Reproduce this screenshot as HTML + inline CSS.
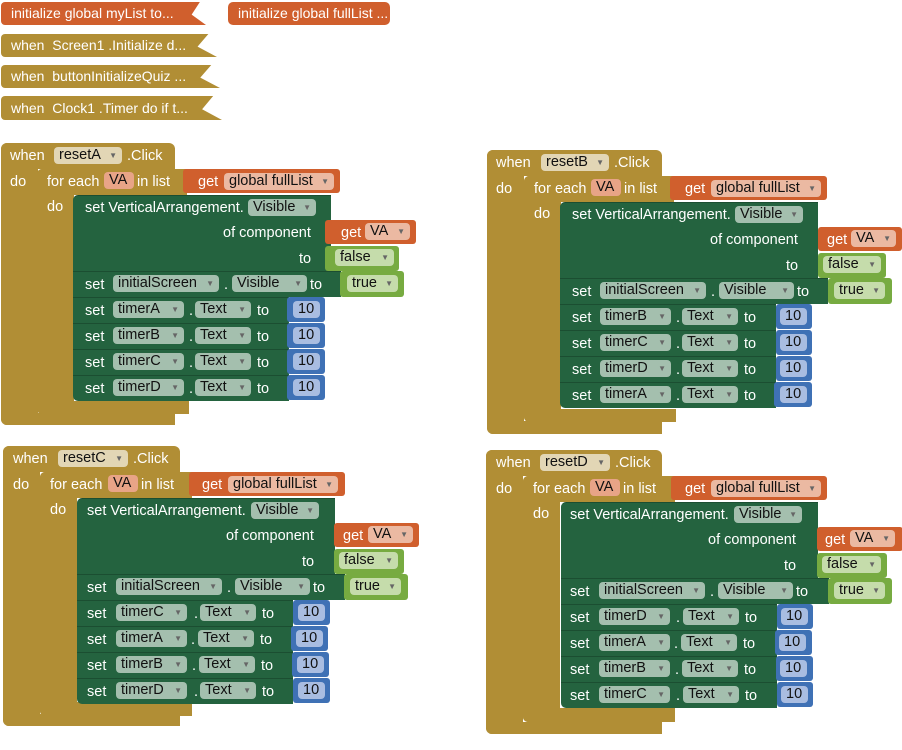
<!DOCTYPE html>
<html><head><meta charset="utf-8"><style>
*{margin:0;padding:0;box-sizing:border-box}
body{width:902px;height:735px;background:#fff;position:relative;overflow:hidden;font-family:"Liberation Sans",Arial,sans-serif;font-size:14.5px;color:#fff}
.g{position:absolute;width:420px;height:300px}
.b{position:absolute}
.gold{background:#b18e35}
.grn{background:#24633f;border-top:1px solid #1b4e31}
.org{background:#d05f2d;border-radius:3px}
.lg{background:#77ab41;border-radius:3px}
.bl{background:#3f71b5;border-radius:3px}
.t{position:absolute;white-space:nowrap;line-height:16px;height:16px;margin-top:1px}
.p{position:absolute;height:17px;line-height:17px;border-radius:4px;padding-left:5px;color:#111;white-space:nowrap}
.p i{font-style:normal;font-size:8px;color:#666;position:absolute;right:5px;top:0}
.pg{background:#e2d6b5}.pd{background:#a4bfae}.po{background:#ebb9a2}.pl{background:#c5dcab}.pb{background:#a9bde1}.pv{background:#e8a487}
.top{position:absolute;height:23px;line-height:23px;padding-left:10px;white-space:nowrap;font-size:14px}
</style></head><body>

<div class="top" style="left:1px;top:2px;width:205px;background:#d05f2d;border-radius:4px 0 0 4px;clip-path:polygon(0 0,97% 0,93% 55%,100% 100%,0 100%)">initialize global myList to...</div>
<div class="top" style="left:228px;top:2px;width:162px;background:#d05f2d;border-radius:5px">initialize global fullList ...</div>
<div class="top" style="left:1px;top:34px;width:216px;background:#b18e35;border-radius:4px 0 0 4px;clip-path:polygon(0 0,96% 0,91% 55%,100% 100%,0 100%)">when &nbsp;Screen1 .Initialize d...</div>
<div class="top" style="left:1px;top:65px;width:219px;background:#b18e35;border-radius:4px 0 0 4px;clip-path:polygon(0 0,96% 0,91% 55%,100% 100%,0 100%)">when &nbsp;buttonInitializeQuiz ...</div>
<div class="top" style="left:1px;top:96px;width:221px;height:24px;line-height:24px;background:#b18e35;border-radius:4px 0 0 4px;clip-path:polygon(0 0,96% 0,91% 55%,100% 100%,0 100%)">when &nbsp;Clock1 .Timer do if t...</div>

<!-- A -->
<div class="g" style="left:1px;top:143px">
 <div class="b gold" style="left:0;top:0;width:174px;height:26px;border-radius:6px 6px 0 0"></div>
 <div class="b gold" style="left:0;top:0;width:37px;height:282px;border-radius:6px 0 0 6px"></div>
 <div class="b gold" style="left:0;top:270px;width:174px;height:12px;border-radius:0 0 0 6px"></div>
 <div class="t" style="left:9px;top:4px">when</div>
 <div class="p pg" style="left:53px;top:4px;width:68px">resetA<i>▼</i></div>
 <div class="t" style="left:126px;top:4px">.Click</div>
 <div class="t" style="left:9px;top:30px">do</div>
 <div class="b gold" style="left:36px;top:26px;width:150px;height:26px;border-radius:5px 0 0 0"></div>
 <div class="b gold" style="left:36px;top:26px;width:37px;height:245px;border-radius:5px 0 0 5px"></div>
 <div class="b gold" style="left:36px;top:258px;width:152px;height:13px;border-radius:0 0 0 5px"></div>
 <div class="t" style="left:46px;top:30px">for each</div>
 <div class="p pv" style="left:103px;top:29px;width:30px">VA</div>
 <div class="t" style="left:136px;top:30px">in list</div>
 <div class="t" style="left:46px;top:55px">do</div>
 <div class="b org" style="left:182px;top:26px;width:157px;height:24px"></div>
 <div class="t" style="left:197px;top:30px">get</div>
 <div class="p po" style="left:223px;top:30px;width:110px">global fullList<i>▼</i></div>
 <div class="b grn" style="left:72px;top:52px;width:258px;height:76px;border-radius:5px 0 0 0"></div>
 <div class="t" style="left:84px;top:56px">set VerticalArrangement.</div>
 <div class="p pd" style="left:247px;top:56px;width:68px">Visible<i>▼</i></div>
 <div class="t" style="left:222px;top:81px">of component</div>
 <div class="t" style="left:298px;top:107px">to</div>
 <div class="b org" style="left:324px;top:77px;width:91px;height:24px"></div>
 <div class="t" style="left:340px;top:81px">get</div>
 <div class="p po" style="left:364px;top:80px;width:45px">VA<i>▼</i></div>
 <div class="b lg" style="left:324px;top:103px;width:74px;height:25px"></div>
 <div class="p pl" style="left:334px;top:106px;width:59px">false<i>▼</i></div>
 <div class="b grn" style="left:72px;top:128px;width:268px;height:26px"></div>
 <div class="t" style="left:84px;top:133px">set</div>
 <div class="p pd" style="left:112px;top:132px;width:106px">initialScreen<i>▼</i></div>
 <div class="t" style="left:223px;top:133px">.</div>
 <div class="p pd" style="left:231px;top:132px;width:75px">Visible<i>▼</i></div>
 <div class="t" style="left:309px;top:133px">to</div>
 <div class="b lg" style="left:339px;top:128px;width:64px;height:26px"></div>
 <div class="p pl" style="left:346px;top:132px;width:51px">true<i>▼</i></div>
 <div class="b grn" style="left:72px;top:154px;width:216px;height:26px"></div>
 <div class="t" style="left:84px;top:159px">set</div><div class="p pd" style="left:112px;top:158px;width:71px">timerA<i>▼</i></div><div class="t" style="left:188px;top:159px">.</div><div class="p pd" style="left:194px;top:158px;width:56px">Text<i>▼</i></div><div class="t" style="left:256px;top:159px">to</div>
 <div class="b bl" style="left:286px;top:154px;width:38px;height:25px"></div><div class="p pb" style="left:292px;top:158px;width:27px">10</div>
 <div class="b grn" style="left:72px;top:180px;width:216px;height:26px"></div>
 <div class="t" style="left:84px;top:185px">set</div><div class="p pd" style="left:112px;top:184px;width:71px">timerB<i>▼</i></div><div class="t" style="left:188px;top:185px">.</div><div class="p pd" style="left:194px;top:184px;width:56px">Text<i>▼</i></div><div class="t" style="left:256px;top:185px">to</div>
 <div class="b bl" style="left:286px;top:180px;width:38px;height:25px"></div><div class="p pb" style="left:292px;top:184px;width:27px">10</div>
 <div class="b grn" style="left:72px;top:206px;width:216px;height:26px"></div>
 <div class="t" style="left:84px;top:211px">set</div><div class="p pd" style="left:112px;top:210px;width:71px">timerC<i>▼</i></div><div class="t" style="left:188px;top:211px">.</div><div class="p pd" style="left:194px;top:210px;width:56px">Text<i>▼</i></div><div class="t" style="left:256px;top:211px">to</div>
 <div class="b bl" style="left:286px;top:206px;width:38px;height:25px"></div><div class="p pb" style="left:292px;top:210px;width:27px">10</div>
 <div class="b grn" style="left:72px;top:232px;width:216px;height:26px;border-radius:0 0 0 5px"></div>
 <div class="t" style="left:84px;top:237px">set</div><div class="p pd" style="left:112px;top:236px;width:71px">timerD<i>▼</i></div><div class="t" style="left:188px;top:237px">.</div><div class="p pd" style="left:194px;top:236px;width:56px">Text<i>▼</i></div><div class="t" style="left:256px;top:237px">to</div>
 <div class="b bl" style="left:286px;top:232px;width:38px;height:25px"></div><div class="p pb" style="left:292px;top:236px;width:27px">10</div>
</div>

<!-- B -->
<div class="g" style="left:487px;top:150px">
 <div class="b gold" style="left:0;top:0;width:175px;height:26px;border-radius:6px 6px 0 0"></div>
 <div class="b gold" style="left:0;top:0;width:37px;height:284px;border-radius:6px 0 0 6px"></div>
 <div class="b gold" style="left:0;top:271px;width:175px;height:13px;border-radius:0 0 0 6px"></div>
 <div class="t" style="left:9px;top:4px">when</div>
 <div class="p pg" style="left:54px;top:4px;width:68px">resetB<i>▼</i></div>
 <div class="t" style="left:127px;top:4px">.Click</div>
 <div class="t" style="left:9px;top:30px">do</div>
 <div class="b gold" style="left:37px;top:26px;width:150px;height:26px;border-radius:5px 0 0 0"></div>
 <div class="b gold" style="left:37px;top:26px;width:37px;height:246px;border-radius:5px 0 0 5px"></div>
 <div class="b gold" style="left:37px;top:259px;width:152px;height:13px;border-radius:0 0 0 5px"></div>
 <div class="t" style="left:47px;top:30px">for each</div>
 <div class="p pv" style="left:104px;top:29px;width:30px">VA</div>
 <div class="t" style="left:137px;top:30px">in list</div>
 <div class="t" style="left:47px;top:55px">do</div>
 <div class="b org" style="left:183px;top:26px;width:157px;height:24px"></div>
 <div class="t" style="left:198px;top:30px">get</div>
 <div class="p po" style="left:224px;top:30px;width:110px">global fullList<i>▼</i></div>
 <div class="b grn" style="left:73px;top:52px;width:258px;height:76px;border-radius:5px 0 0 0"></div>
 <div class="t" style="left:85px;top:56px">set VerticalArrangement.</div>
 <div class="p pd" style="left:248px;top:56px;width:68px">Visible<i>▼</i></div>
 <div class="t" style="left:223px;top:81px">of component</div>
 <div class="t" style="left:299px;top:107px">to</div>
 <div class="b org" style="left:331px;top:77px;width:84px;height:24px"></div>
 <div class="t" style="left:340px;top:81px">get</div>
 <div class="p po" style="left:364px;top:80px;width:45px">VA<i>▼</i></div>
 <div class="b lg" style="left:331px;top:103px;width:68px;height:25px"></div>
 <div class="p pl" style="left:336px;top:106px;width:58px">false<i>▼</i></div>
 <div class="b grn" style="left:73px;top:128px;width:268px;height:26px"></div>
 <div class="t" style="left:85px;top:133px">set</div>
 <div class="p pd" style="left:113px;top:132px;width:106px">initialScreen<i>▼</i></div>
 <div class="t" style="left:224px;top:133px">.</div>
 <div class="p pd" style="left:232px;top:132px;width:75px">Visible<i>▼</i></div>
 <div class="t" style="left:310px;top:133px">to</div>
 <div class="b lg" style="left:341px;top:128px;width:64px;height:26px"></div>
 <div class="p pl" style="left:347px;top:132px;width:51px">true<i>▼</i></div>
 <div class="b grn" style="left:73px;top:154px;width:216px;height:26px"></div>
 <div class="t" style="left:85px;top:159px">set</div><div class="p pd" style="left:113px;top:158px;width:71px">timerB<i>▼</i></div><div class="t" style="left:189px;top:159px">.</div><div class="p pd" style="left:195px;top:158px;width:56px">Text<i>▼</i></div><div class="t" style="left:257px;top:159px">to</div>
 <div class="b bl" style="left:289px;top:154px;width:36px;height:25px"></div><div class="p pb" style="left:293px;top:158px;width:27px">10</div>
 <div class="b grn" style="left:73px;top:180px;width:216px;height:26px"></div>
 <div class="t" style="left:85px;top:185px">set</div><div class="p pd" style="left:113px;top:184px;width:71px">timerC<i>▼</i></div><div class="t" style="left:189px;top:185px">.</div><div class="p pd" style="left:195px;top:184px;width:56px">Text<i>▼</i></div><div class="t" style="left:257px;top:185px">to</div>
 <div class="b bl" style="left:289px;top:180px;width:36px;height:25px"></div><div class="p pb" style="left:293px;top:184px;width:27px">10</div>
 <div class="b grn" style="left:73px;top:206px;width:216px;height:26px"></div>
 <div class="t" style="left:85px;top:211px">set</div><div class="p pd" style="left:113px;top:210px;width:71px">timerD<i>▼</i></div><div class="t" style="left:189px;top:211px">.</div><div class="p pd" style="left:195px;top:210px;width:56px">Text<i>▼</i></div><div class="t" style="left:257px;top:211px">to</div>
 <div class="b bl" style="left:289px;top:206px;width:36px;height:25px"></div><div class="p pb" style="left:293px;top:210px;width:27px">10</div>
 <div class="b grn" style="left:73px;top:232px;width:216px;height:26px;border-radius:0 0 0 5px"></div>
 <div class="t" style="left:85px;top:237px">set</div><div class="p pd" style="left:113px;top:236px;width:71px">timerA<i>▼</i></div><div class="t" style="left:189px;top:237px">.</div><div class="p pd" style="left:195px;top:236px;width:56px">Text<i>▼</i></div><div class="t" style="left:257px;top:237px">to</div>
 <div class="b bl" style="left:287px;top:232px;width:38px;height:25px"></div><div class="p pb" style="left:293px;top:236px;width:27px">10</div>
</div>

<!-- C -->
<div class="g" style="left:3px;top:446px">
 <div class="b gold" style="left:0;top:0;width:177px;height:26px;border-radius:6px 6px 0 0"></div>
 <div class="b gold" style="left:0;top:0;width:37px;height:280px;border-radius:6px 0 0 6px"></div>
 <div class="b gold" style="left:0;top:268px;width:177px;height:12px;border-radius:0 0 0 6px"></div>
 <div class="t" style="left:10px;top:4px">when</div>
 <div class="p pg" style="left:55px;top:4px;width:70px">resetC<i>▼</i></div>
 <div class="t" style="left:130px;top:4px">.Click</div>
 <div class="t" style="left:10px;top:30px">do</div>
 <div class="b gold" style="left:37px;top:26px;width:152px;height:26px;border-radius:5px 0 0 0"></div>
 <div class="b gold" style="left:37px;top:26px;width:37px;height:244px;border-radius:5px 0 0 5px"></div>
 <div class="b gold" style="left:37px;top:256px;width:152px;height:14px;border-radius:0 0 0 5px"></div>
 <div class="t" style="left:47px;top:30px">for each</div>
 <div class="p pv" style="left:105px;top:29px;width:30px">VA</div>
 <div class="t" style="left:138px;top:30px">in list</div>
 <div class="t" style="left:47px;top:55px">do</div>
 <div class="b org" style="left:186px;top:26px;width:156px;height:24px"></div>
 <div class="t" style="left:199px;top:30px">get</div>
 <div class="p po" style="left:225px;top:30px;width:110px">global fullList<i>▼</i></div>
 <div class="b grn" style="left:74px;top:52px;width:258px;height:76px;border-radius:5px 0 0 0"></div>
 <div class="t" style="left:84px;top:56px">set VerticalArrangement.</div>
 <div class="p pd" style="left:248px;top:56px;width:68px">Visible<i>▼</i></div>
 <div class="t" style="left:223px;top:81px">of component</div>
 <div class="t" style="left:299px;top:107px">to</div>
 <div class="b org" style="left:331px;top:77px;width:85px;height:24px"></div>
 <div class="t" style="left:340px;top:81px">get</div>
 <div class="p po" style="left:365px;top:80px;width:45px">VA<i>▼</i></div>
 <div class="b lg" style="left:331px;top:103px;width:70px;height:25px"></div>
 <div class="p pl" style="left:336px;top:106px;width:59px">false<i>▼</i></div>
 <div class="b grn" style="left:74px;top:128px;width:268px;height:26px"></div>
 <div class="t" style="left:84px;top:133px">set</div>
 <div class="p pd" style="left:113px;top:132px;width:106px">initialScreen<i>▼</i></div>
 <div class="t" style="left:224px;top:133px">.</div>
 <div class="p pd" style="left:232px;top:132px;width:75px">Visible<i>▼</i></div>
 <div class="t" style="left:310px;top:133px">to</div>
 <div class="b lg" style="left:341px;top:128px;width:64px;height:26px"></div>
 <div class="p pl" style="left:347px;top:132px;width:51px">true<i>▼</i></div>
 <div class="b grn" style="left:74px;top:154px;width:216px;height:26px"></div>
 <div class="t" style="left:84px;top:159px">set</div><div class="p pd" style="left:113px;top:158px;width:71px">timerC<i>▼</i></div><div class="t" style="left:191px;top:159px">.</div><div class="p pd" style="left:197px;top:158px;width:56px">Text<i>▼</i></div><div class="t" style="left:259px;top:159px">to</div>
 <div class="b bl" style="left:290px;top:154px;width:37px;height:25px"></div><div class="p pb" style="left:295px;top:158px;width:27px">10</div>
 <div class="b grn" style="left:74px;top:180px;width:216px;height:26px"></div>
 <div class="t" style="left:84px;top:185px">set</div><div class="p pd" style="left:113px;top:184px;width:71px">timerA<i>▼</i></div><div class="t" style="left:188px;top:185px">.</div><div class="p pd" style="left:195px;top:184px;width:56px">Text<i>▼</i></div><div class="t" style="left:257px;top:185px">to</div>
 <div class="b bl" style="left:288px;top:180px;width:37px;height:25px"></div><div class="p pb" style="left:293px;top:184px;width:27px">10</div>
 <div class="b grn" style="left:74px;top:206px;width:216px;height:26px"></div>
 <div class="t" style="left:84px;top:211px">set</div><div class="p pd" style="left:113px;top:210px;width:71px">timerB<i>▼</i></div><div class="t" style="left:189px;top:211px">.</div><div class="p pd" style="left:196px;top:210px;width:56px">Text<i>▼</i></div><div class="t" style="left:258px;top:211px">to</div>
 <div class="b bl" style="left:289px;top:206px;width:37px;height:25px"></div><div class="p pb" style="left:294px;top:210px;width:27px">10</div>
 <div class="b grn" style="left:74px;top:232px;width:216px;height:26px;border-radius:0 0 0 5px"></div>
 <div class="t" style="left:84px;top:237px">set</div><div class="p pd" style="left:113px;top:236px;width:71px">timerD<i>▼</i></div><div class="t" style="left:191px;top:237px">.</div><div class="p pd" style="left:197px;top:236px;width:56px">Text<i>▼</i></div><div class="t" style="left:259px;top:237px">to</div>
 <div class="b bl" style="left:290px;top:232px;width:37px;height:25px"></div><div class="p pb" style="left:295px;top:236px;width:27px">10</div>
</div>

<!-- D -->
<div class="g" style="left:486px;top:450px">
 <div class="b gold" style="left:0;top:0;width:176px;height:26px;border-radius:6px 6px 0 0"></div>
 <div class="b gold" style="left:0;top:0;width:37px;height:284px;border-radius:6px 0 0 6px"></div>
 <div class="b gold" style="left:0;top:272px;width:176px;height:12px;border-radius:0 0 0 6px"></div>
 <div class="t" style="left:10px;top:4px">when</div>
 <div class="p pg" style="left:54px;top:4px;width:70px">resetD<i>▼</i></div>
 <div class="t" style="left:129px;top:4px">.Click</div>
 <div class="t" style="left:10px;top:30px">do</div>
 <div class="b gold" style="left:37px;top:26px;width:152px;height:26px;border-radius:5px 0 0 0"></div>
 <div class="b gold" style="left:37px;top:26px;width:37px;height:246px;border-radius:5px 0 0 5px"></div>
 <div class="b gold" style="left:37px;top:258px;width:152px;height:14px;border-radius:0 0 0 5px"></div>
 <div class="t" style="left:47px;top:30px">for each</div>
 <div class="p pv" style="left:104px;top:29px;width:30px">VA</div>
 <div class="t" style="left:137px;top:30px">in list</div>
 <div class="t" style="left:47px;top:55px">do</div>
 <div class="b org" style="left:185px;top:26px;width:156px;height:24px"></div>
 <div class="t" style="left:199px;top:30px">get</div>
 <div class="p po" style="left:225px;top:30px;width:110px">global fullList<i>▼</i></div>
 <div class="b grn" style="left:75px;top:52px;width:257px;height:76px;border-radius:5px 0 0 0"></div>
 <div class="t" style="left:84px;top:56px">set VerticalArrangement.</div>
 <div class="p pd" style="left:248px;top:56px;width:68px">Visible<i>▼</i></div>
 <div class="t" style="left:222px;top:81px">of component</div>
 <div class="t" style="left:298px;top:107px">to</div>
 <div class="b org" style="left:331px;top:77px;width:86px;height:24px"></div>
 <div class="t" style="left:339px;top:81px">get</div>
 <div class="p po" style="left:364px;top:80px;width:45px">VA<i>▼</i></div>
 <div class="b lg" style="left:331px;top:103px;width:70px;height:25px"></div>
 <div class="p pl" style="left:336px;top:106px;width:59px">false<i>▼</i></div>
 <div class="b grn" style="left:75px;top:128px;width:268px;height:26px"></div>
 <div class="t" style="left:84px;top:133px">set</div>
 <div class="p pd" style="left:113px;top:132px;width:106px">initialScreen<i>▼</i></div>
 <div class="t" style="left:224px;top:133px">.</div>
 <div class="p pd" style="left:232px;top:132px;width:75px">Visible<i>▼</i></div>
 <div class="t" style="left:310px;top:133px">to</div>
 <div class="b lg" style="left:342px;top:128px;width:64px;height:26px"></div>
 <div class="p pl" style="left:348px;top:132px;width:51px">true<i>▼</i></div>
 <div class="b grn" style="left:75px;top:154px;width:216px;height:26px"></div>
 <div class="t" style="left:84px;top:159px">set</div><div class="p pd" style="left:113px;top:158px;width:71px">timerD<i>▼</i></div><div class="t" style="left:190px;top:159px">.</div><div class="p pd" style="left:197px;top:158px;width:56px">Text<i>▼</i></div><div class="t" style="left:259px;top:159px">to</div>
 <div class="b bl" style="left:291px;top:154px;width:36px;height:25px"></div><div class="p pb" style="left:295px;top:158px;width:27px">10</div>
 <div class="b grn" style="left:75px;top:180px;width:216px;height:26px"></div>
 <div class="t" style="left:84px;top:185px">set</div><div class="p pd" style="left:113px;top:184px;width:71px">timerA<i>▼</i></div><div class="t" style="left:188px;top:185px">.</div><div class="p pd" style="left:195px;top:184px;width:56px">Text<i>▼</i></div><div class="t" style="left:257px;top:185px">to</div>
 <div class="b bl" style="left:289px;top:180px;width:37px;height:25px"></div><div class="p pb" style="left:293px;top:184px;width:27px">10</div>
 <div class="b grn" style="left:75px;top:206px;width:216px;height:26px"></div>
 <div class="t" style="left:84px;top:211px">set</div><div class="p pd" style="left:113px;top:210px;width:71px">timerB<i>▼</i></div><div class="t" style="left:189px;top:211px">.</div><div class="p pd" style="left:196px;top:210px;width:56px">Text<i>▼</i></div><div class="t" style="left:258px;top:211px">to</div>
 <div class="b bl" style="left:290px;top:206px;width:37px;height:25px"></div><div class="p pb" style="left:294px;top:210px;width:27px">10</div>
 <div class="b grn" style="left:75px;top:232px;width:216px;height:26px;border-radius:0 0 0 5px"></div>
 <div class="t" style="left:84px;top:237px">set</div><div class="p pd" style="left:113px;top:236px;width:71px">timerC<i>▼</i></div><div class="t" style="left:190px;top:237px">.</div><div class="p pd" style="left:197px;top:236px;width:56px">Text<i>▼</i></div><div class="t" style="left:259px;top:237px">to</div>
 <div class="b bl" style="left:291px;top:232px;width:36px;height:25px"></div><div class="p pb" style="left:295px;top:236px;width:27px">10</div>
</div>

</body></html>
